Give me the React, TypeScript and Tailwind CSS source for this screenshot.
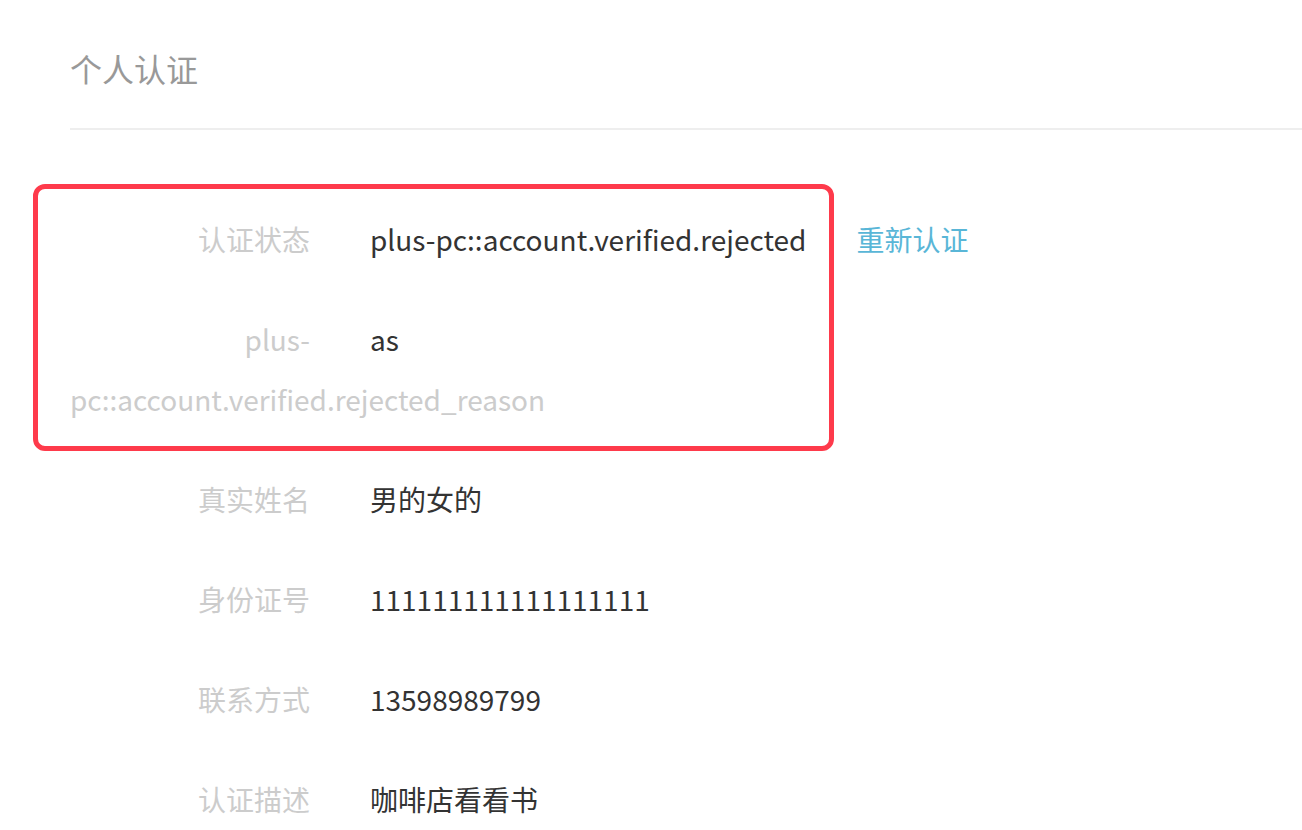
import React from "react";

type Row = {
  label: string;
  value: string;
  action?: string;
};

const rows: Row[] = [
  { label: "认证状态", value: "plus-pc::account.verified.rejected", action: "重新认证" },
  { label: "plus-pc::account.verified.rejected_reason", value: "as" },
  { label: "真实姓名", value: "男的女的" },
  { label: "身份证号", value: "111111111111111111" },
  { label: "联系方式", value: "13598989799" },
  { label: "认证描述", value: "咖啡店看看书" },
];

const InfoRow = ({ row }: { row: Row }) => {
  return (
    <div className="mb-[40px] flex items-start leading-[60px]">
      <div className="w-[240px] shrink-0 text-right text-[#cccccc]">{row.label}</div>
      <div className="ml-[60px] whitespace-nowrap text-[#333333]">{row.value}</div>
      {row.action && (
        <a href="#" className="ml-[50px] whitespace-nowrap text-[#59b6d7]">
          {row.action}
        </a>
      )}
    </div>
  );
};

const App = () => {
  return (
    <div
      className="h-[830px] overflow-hidden bg-white pl-[70px] text-[28px]"
      style={{ fontFamily: '"Noto Sans CJK SC", "Noto Sans", sans-serif' }}
    >
      <header className="border-b-2 border-[#eeeeee] pt-[44px] pb-[36px]">
        <h1 className="text-[32px] leading-[48px] text-[#999999]">个人认证</h1>
      </header>

      <div className="relative mt-[79px]">
        {/* highlight box around status + reason */}
        <div className="pointer-events-none absolute top-[-25px] left-[-37px] h-[267px] w-[801px] rounded-[12px] border-[5px] border-[#fe3a4b]" />
        {rows.map((row, index) => (
          <InfoRow key={index} row={row} />
        ))}
      </div>
    </div>
  );
};

export default App;
